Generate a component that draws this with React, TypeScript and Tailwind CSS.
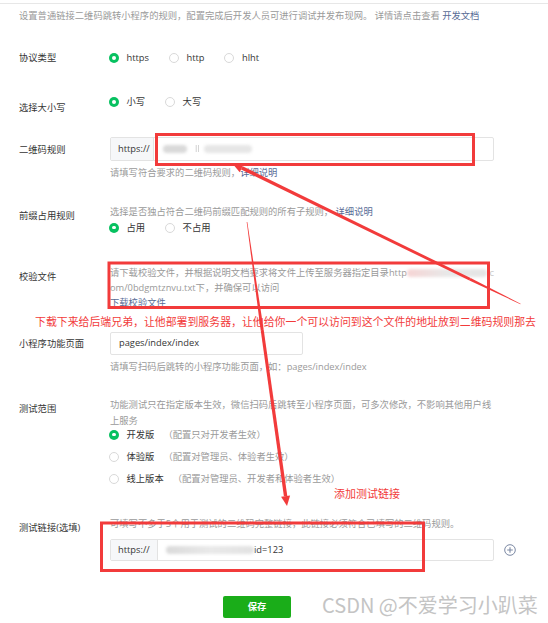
import React from 'react';

const RED = '#f23b3b';

type Pt = [number, number];

const fmt = (pts: number[][]) => pts.map((p) => p.map((v) => v.toFixed(1)).join(',')).join(' ');

// tapered stroke between two points, used for the hand-drawn arrows
const taper = (a: Pt, b: Pt, w0: number, w1: number) => {
  const dx = b[0] - a[0];
  const dy = b[1] - a[1];
  const len = Math.hypot(dx, dy);
  const nx = -dy / len;
  const ny = dx / len;
  return fmt([
    [a[0] + (nx * w0) / 2, a[1] + (ny * w0) / 2],
    [b[0] + (nx * w1) / 2, b[1] + (ny * w1) / 2],
    [b[0] - (nx * w1) / 2, b[1] - (ny * w1) / 2],
    [a[0] - (nx * w0) / 2, a[1] - (ny * w0) / 2],
  ]);
};

const arrowHead = (tip: Pt, from: Pt, len: number, hw: number): { points: string; base: Pt } => {
  const dx = from[0] - tip[0];
  const dy = from[1] - tip[1];
  const d = Math.hypot(dx, dy);
  const ux = dx / d;
  const uy = dy / d;
  const base: Pt = [tip[0] + ux * len, tip[1] + uy * len];
  return {
    base,
    points: fmt([
      tip,
      [base[0] - uy * hw, base[1] + ux * hw],
      [base[0] + uy * hw, base[1] - ux * hw],
    ]),
  };
};

const Radio: React.FC<{ checked?: boolean; children: React.ReactNode }> = ({ checked, children }) => (
  <span className="mr-[20px] inline-flex items-center">
    {checked ? (
      <span className="flex h-[10px] w-[10px] items-center justify-center rounded-full bg-[#07c160]">
        <span className="h-[3.5px] w-[3.5px] rounded-full bg-white" />
      </span>
    ) : (
      <span className="h-[10px] w-[10px] rounded-full border border-[#d9d9d9] bg-white" />
    )}
    <span className="ml-[7.5px] text-[#353535]">{children}</span>
  </span>
);

const Blur: React.FC<{ w: number; className?: string }> = ({ w, className }) => (
  <span
    className={`inline-block h-[8px] rounded-full blur-[1.5px] align-middle ${className ?? 'bg-[#e2e2e2]'}`}
    style={{ width: w }}
  />
);

const Label: React.FC<{ children: React.ReactNode; pt: string }> = ({ children, pt }) => (
  <div className={`w-[110px] shrink-0 pl-[19px] text-[#353535] ${pt}`}>{children}</div>
);

const Overlay: React.FC = () => {
  const a1Tip: Pt = [232, 163];
  const a1Tail: Pt = [520.5, 304];
  const a1Mid: Pt = [470, 279.3];
  const h1 = arrowHead(a1Tip, a1Tail, 11, 5);

  const a2Top: Pt = [247, 222];
  const a2Mid: Pt = [262.2, 330];
  const a2Tip: Pt = [287, 506];
  const h2 = arrowHead(a2Tip, a2Top, 10, 4.5);

  return (
    <svg className="pointer-events-none absolute left-0 top-0" width={548} height={623}>
      <rect x={156.5} y={134.5} width={317} height={30} fill="none" stroke={RED} strokeWidth={3} />
      <rect x={109} y={263} width={379.5} height={44.5} fill="none" stroke={RED} strokeWidth={3} />
      <rect x={101.5} y={523} width={322} height={47.5} fill="none" stroke={RED} strokeWidth={3} />

      <polygon points={taper(h1.base, a1Mid, 3.4, 2.6)} fill={RED} />
      <polygon points={taper(a1Mid, a1Tail, 2.6, 0.5)} fill={RED} />
      <polygon points={h1.points} fill={RED} />

      <polygon points={taper(a2Top, a2Mid, 0.6, 3)} fill={RED} />
      <polygon points={taper(a2Mid, h2.base, 3, 3.4)} fill={RED} />
      <polygon points={h2.points} fill={RED} />
    </svg>
  );
};

export default function App() {
  return (
    <div className="relative h-[623px] w-[548px] overflow-hidden bg-white font-['Open_Sans','Noto_Sans_CJK_SC',sans-serif] text-[9.3px] leading-[16px]">
      <div className="pt-[3px]">
        <div className="border-t border-[#e7e7e7]" />
      </div>

      <p className="mt-[4px] pl-[19px] text-[#9a9a9a]">
        设置普通链接二维码跳转小程序的规则，配置完成后开发人员可进行调试并发布现网。 详情请点击查看{' '}
        <span className="text-[#576b95]">开发文档</span>
      </p>

      {/* 协议类型 */}
      <div className="mt-[26px] flex h-[16px] items-center">
        <Label pt="">协议类型</Label>
        <div className="-ml-[1px] flex items-center">
          <Radio checked>https</Radio>
          <Radio>http</Radio>
          <Radio>hlht</Radio>
        </div>
      </div>

      {/* 选择大小写 */}
      <div className="mt-[28px] flex items-start">
        <Label pt="pt-[6px]">选择大小写</Label>
        <div className="-ml-[1px] flex h-[16px] items-center">
          <Radio checked>小写</Radio>
          <Radio>大写</Radio>
        </div>
      </div>

      {/* 二维码规则 */}
      <div className="mt-[21px] flex items-start">
        <Label pt="pt-[5px]">二维码规则</Label>
        <div className="flex flex-col">
          <div className="flex h-[24px] w-[384px] rounded-[2px] border border-[#e3e3e3]">
            <div className="flex w-[43px] items-center border-r border-[#e3e3e3] bg-[#f6f7f9] pl-[7px] text-[#353535]">
              https://
            </div>
            <div className="flex items-center pl-[9px]">
              <Blur w={24} className="bg-[#d9d9d9]" />
              <span className="ml-[8px] text-[#c9c9c9] blur-[0.6px]">ll</span>
              <Blur w={48} className="ml-[4px] bg-[#e6e6e6]" />
            </div>
          </div>
          <div className="mt-[4px] text-[#9a9a9a]">
            请填写符合要求的二维码规则，<span className="text-[#576b95]">详细说明</span>
          </div>
        </div>
      </div>

      {/* 前缀占用规则 */}
      <div className="mt-[23px] flex items-start">
        <Label pt="pt-[3.5px]">前缀占用规则</Label>
        <div className="flex flex-col">
          <div className="text-[#9a9a9a]">
            选择是否独占符合二维码前缀匹配规则的所有子规则， <span className="text-[#576b95]">详细说明</span>
          </div>
          <div className="-ml-[1px] flex h-[15px] items-center">
            <Radio checked>占用</Radio>
            <Radio>不占用</Radio>
          </div>
        </div>
      </div>

      {/* 校验文件 */}
      <div className="mt-[29.5px] flex items-start">
        <Label pt="pt-[4px]">校验文件</Label>
        <div className="w-[384px] leading-[15px] text-[#9a9a9a]">
          <div className="whitespace-nowrap">
            请下载校验文件，并根据说明文档要求将文件上传至服务器指定目录http
            <Blur w={80} className="bg-linear-to-r from-[#f6d4d4] via-[#e8e8e8] to-[#e4e4e4]" />
            <span className="text-[#c8c8c8]">.c</span>
          </div>
          <div>om/0bdgmtznvu.txt下，并确保可以访问</div>
          <div className="text-[#576b95]">下载校验文件</div>
        </div>
      </div>

      <div className="mt-[4px] whitespace-nowrap pl-[35px] text-[10.9px] leading-[16px] text-[#f23b3b]">
        下载下来给后端兄弟，让他部署到服务器，让他给你一个可以访问到这个文件的地址放到二维码规则那去
      </div>

      {/* 小程序功能页面 */}
      <div className="mt-[2px] flex items-start">
        <Label pt="pt-[4.5px]">小程序功能页面</Label>
        <div className="flex flex-col">
          <div className="flex h-[23px] w-[193px] items-center rounded-[2px] border border-[#e3e3e3] pl-[8px] text-[#353535]">
            pages/index/index
          </div>
          <div className="mt-[4px] text-[#9a9a9a]">请填写扫码后跳转的小程序功能页面，如：pages/index/index</div>
        </div>
      </div>

      {/* 测试范围 */}
      <div className="mt-[22px] flex items-start">
        <Label pt="pt-[4px]">测试范围</Label>
        <div className="flex flex-col">
          <div className="text-[#9a9a9a]">
            功能测试只在指定版本生效，微信扫码后跳转至小程序页面，可多次修改，不影响其他用户线
            <br />
            上服务
          </div>
          <div className="-ml-[1px] -mt-[5px] flex flex-col">
            {[
              ['开发版', '（配置只对开发者生效）', true],
              ['体验版', '（配置对管理员、体验者生效）', false],
              ['线上版本', '（配置对管理员、开发者和体验者生效）', false],
            ].map(([name, note, on]) => (
              <div key={name as string} className="flex h-[22px] items-center">
                <Radio checked={on as boolean}>
                  {name}
                  <span className="ml-[9px] text-[#9a9a9a]">{note}</span>
                </Radio>
              </div>
            ))}
          </div>
        </div>
      </div>

      <div className="-mt-[3.5px] pl-[334px] text-[11px] leading-[16px] text-[#f23b3b]">添加测试链接</div>

      {/* 测试链接(选填) */}
      <div className="mt-[14px] flex items-start">
        <Label pt="pt-[4px]">测试链接(选填)</Label>
        <div className="flex flex-col">
          <div className="text-[#9a9a9a]">
            可填写不多于5个用于测试的二维码完整链接，此链接必须符合已填写的二维码规则。
          </div>
          <div className="mt-[7px] flex items-center">
            <div className="flex h-[22px] w-[384px] rounded-[2px] border border-[#e3e3e3]">
              <div className="flex w-[47px] items-center border-r border-[#e3e3e3] bg-[#f6f7f9] pl-[7px] text-[#353535]">
                https://
              </div>
              <div className="flex items-center pl-[8px] text-[#353535]">
                <Blur w={88} className="bg-linear-to-r from-[#dadada] via-[#e9e9e9] to-[#e2e2e2]" />
                <span>id=123</span>
              </div>
            </div>
            <svg className="ml-[9.5px]" width="12" height="12" viewBox="0 0 12 12">
              <circle cx="6" cy="6" r="5.3" fill="none" stroke="#7b88a3" strokeWidth="1" />
              <path d="M6 3.2v5.6M3.2 6h5.6" stroke="#7b88a3" strokeWidth="1.1" />
            </svg>
          </div>
        </div>
      </div>

      <div className="ml-[223px] mt-[35px] flex h-[22px] w-[68px] items-center justify-center rounded-[2px] bg-[#1aad19] font-bold text-white">
        保存
      </div>

      <Overlay />

      <div className="absolute left-[322px] top-[592px] whitespace-nowrap font-['Noto_Sans_CJK_SC',sans-serif] text-[20px] leading-[26px] text-[#c4c4c4]">
        CSDN @不爱学习小趴菜
      </div>
    </div>
  );
}
